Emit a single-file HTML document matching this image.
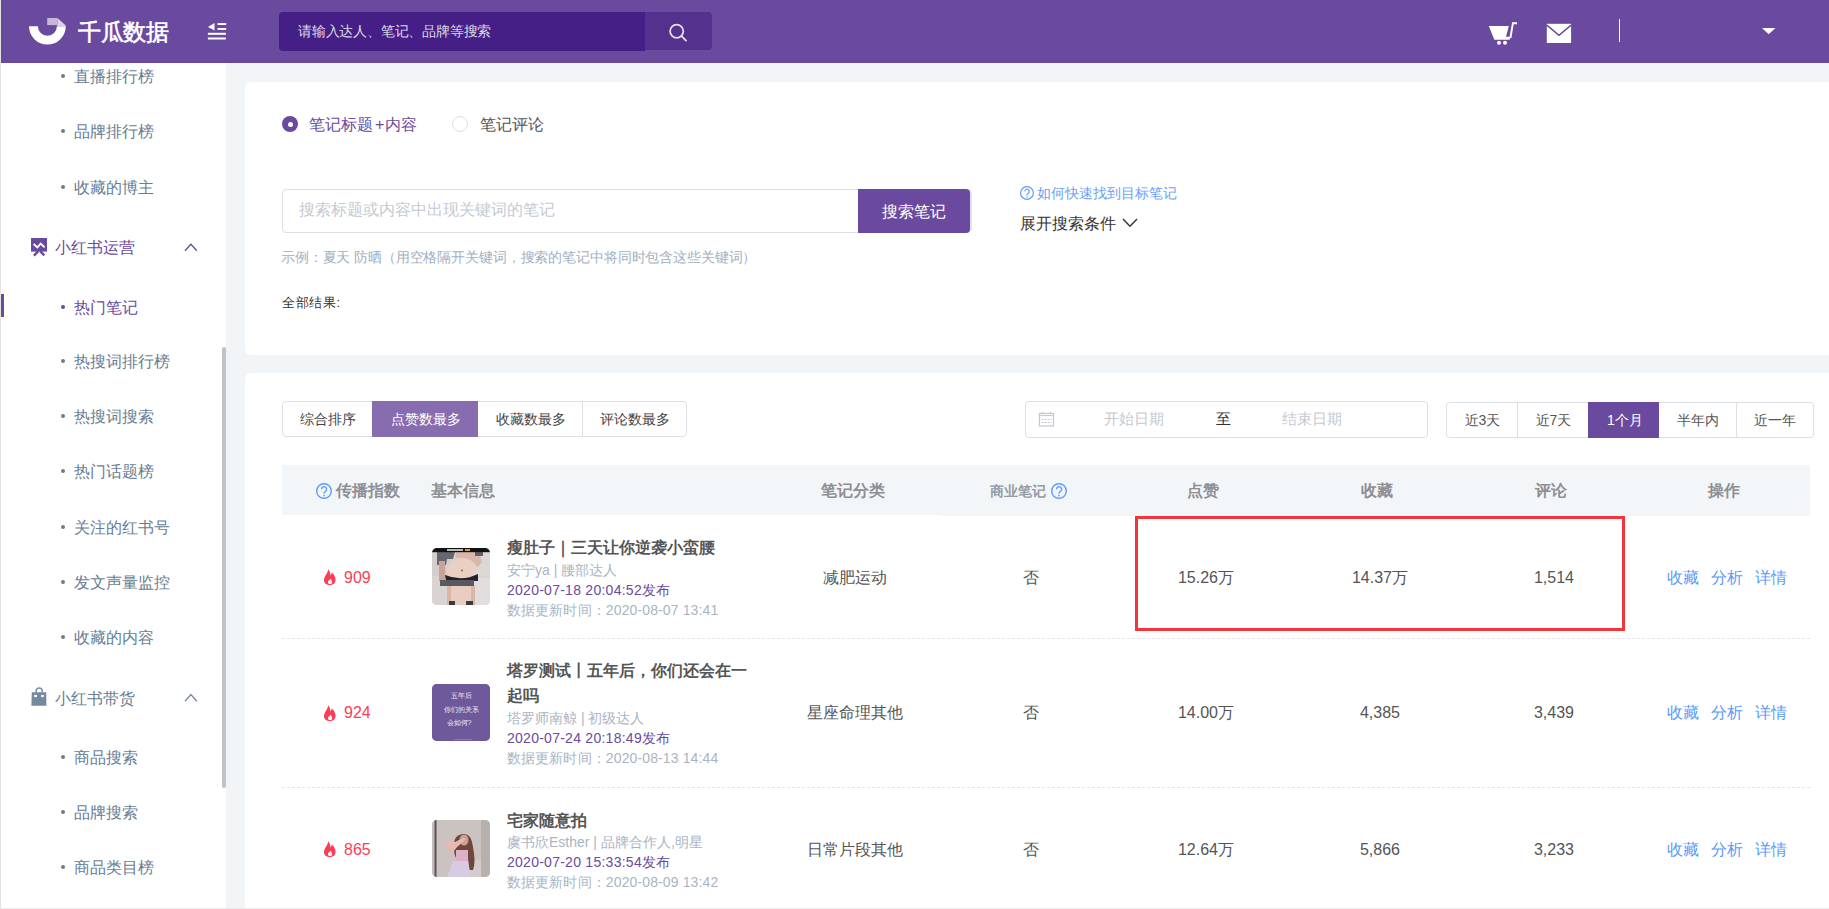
<!DOCTYPE html>
<html><head><meta charset="utf-8">
<style>
*{margin:0;padding:0;box-sizing:border-box}
html,body{width:1829px;height:909px;overflow:hidden}
body{position:relative;background:#f2f5f8;font-family:"Liberation Sans",sans-serif;color:#333}
.a{position:absolute;white-space:nowrap}
#lline{left:0;top:0;width:1px;height:909px;background:#e2e2e2}
#bline{left:0;top:908px;width:1829px;height:1px;background:#ebebeb}
#hdr{left:1px;top:0;width:1828px;height:63px;background:#6a4a9e}
#side{left:1px;top:63px;width:225px;height:846px;background:#fff}
.card{background:#fff;border-radius:6px}
#c1{left:245px;top:82px;width:1600px;height:273px}
#c2{left:245px;top:373px;width:1600px;height:600px}
#logot{left:78px;top:18px;font-size:22.6px;line-height:30px;color:#fff;-webkit-text-stroke:0.6px #fff;letter-spacing:-0.4px}
#sbox{left:279px;top:12px;width:366px;height:39px;background:#461f86;border-radius:4px 0 0 4px}
#sbtn{left:645px;top:12px;width:67px;height:38px;background:#53318d;border-radius:0 4px 4px 0}
#sph{left:298px;top:21px;letter-spacing:-0.2px;font-size:14px;line-height:20px;color:#dcdbe8}
.si{left:74px;font-size:16px;line-height:20px;color:#687d93}
.si i{position:absolute;left:-13px;top:7px;width:4px;height:4px;border-radius:2px;background:#687d93}
.si.act{color:#6a4a9e}.si.act i{background:#6a4a9e}
.sg{left:55px;font-size:16px;line-height:20px;color:#687d93}
.t16{font-size:16px;line-height:20px}
.t14{font-size:14px;line-height:20px}
.th{top:481px;font-size:16px;line-height:20px;font-weight:bold;color:#8e8f94}
#sin{left:282px;top:189px;width:689px;height:44px;border:1px solid #dcdfe6;border-radius:4px;background:#fff}
#sbtn2{left:858px;top:189px;width:112px;height:44px;background:#6a4a9e;border-radius:0 4px 4px 0}
.rv{font-size:16px;line-height:20px;color:#555}
.cc{text-align:center}
.lk{color:#5b9bfa}
.ttl{left:507px;width:252px;white-space:normal;font-size:16px;line-height:25px;font-weight:bold;color:#555}
.sub{left:507px;font-size:14px;line-height:20px}
.thumb{left:432px;width:58px;height:57px;border-radius:5px;overflow:hidden}
.thumb svg{display:block}
#th0{background:#cfc9c9}
#th1{background:#6e5a9c}
#th2{background:#bdb3b0}
.dash{left:282px;width:1530px;height:1px;background:repeating-linear-gradient(90deg,#e3e4f0 0,#e3e4f0 3px,transparent 3px,transparent 5px)}
</style></head><body>
<div class="a" id="hdr"></div>
<svg class="a" style="left:24px;top:12px" width="48" height="38" viewBox="0 0 48 38">
<path d="M5,14.2 A18.4,18.4 0 0 0 41.8,14.2 L32.9,14.2 A9.5,9.5 0 0 1 13.9,14.2 Z" fill="#fff"/>
<rect x="23.2" y="6" width="10.2" height="7.1" fill="#c6b6dc"/>
<polygon points="33.4,6 41.8,13.6 41.8,14.2 32.9,14.2 33.4,13" fill="#ddd3ea"/>
</svg>
<div class="a" id="logot">千瓜数据</div>
<svg class="a" style="left:200px;top:16px" width="36" height="30" viewBox="0 0 36 30">
<polygon points="7.9,10.9 14.5,7.1 14.5,14.5" fill="#fff"/>
<rect x="17.5" y="7.1" width="8.7" height="1.9" fill="#fff"/>
<rect x="17.5" y="12" width="8.7" height="1.9" fill="#fff"/>
<rect x="7.9" y="16.8" width="18" height="2" fill="#fff"/>
<rect x="7.9" y="21.5" width="18" height="2" fill="#fff"/>
</svg>
<div class="a" id="sbox"></div>
<div class="a" id="sbtn"></div>
<div class="a" id="sph">请输入达人、笔记、品牌等搜索</div>
<svg class="a" style="left:636px;top:6px" width="80" height="50" viewBox="0 0 80 50">
<circle cx="40.7" cy="25.3" r="6.6" fill="none" stroke="#e4def0" stroke-width="1.8"/>
<line x1="45.6" y1="30.2" x2="50" y2="34.6" stroke="#e4def0" stroke-width="1.9" stroke-linecap="round"/>
</svg>
<svg class="a" style="left:1482px;top:14px" width="100" height="38" viewBox="0 0 100 38">
<polygon points="6.8,12 26.8,12 24,22.8 28.3,22.8 27.6,25.8 12.3,25.8" fill="#fff"/>
<polyline points="28.4,24 30.9,9.2 35,9.2" fill="none" stroke="#fff" stroke-width="1.9"/>
<circle cx="17" cy="28.7" r="2" fill="#fff"/>
<circle cx="23" cy="28.7" r="2" fill="#fff"/>
<rect x="64.8" y="9.8" width="24.3" height="19.2" fill="#fff"/>
<polyline points="64.8,11.2 77,21.3 89.1,11.2" fill="none" stroke="#6a4a9e" stroke-width="1.5"/>
</svg>
<div class="a" style="left:1619px;top:19px;width:1px;height:23px;background:#fff"></div>
<svg class="a" style="left:1760px;top:26px" width="18" height="10" viewBox="0 0 18 10">
<polygon points="2,2 15.5,2 8.7,8.3" fill="#fff"/>
</svg>
<div class="a" id="side"></div>
<div class="a si" style="top:66.8px"><i></i>直播排行榜</div>
<div class="a si" style="top:121.9px"><i></i>品牌排行榜</div>
<div class="a si" style="top:177.6px"><i></i>收藏的博主</div>
<div class="a si act" style="top:297.8px"><i></i>热门笔记</div>
<div class="a si" style="top:352.0px"><i></i>热搜词排行榜</div>
<div class="a si" style="top:407.4px"><i></i>热搜词搜索</div>
<div class="a si" style="top:462.3px"><i></i>热门话题榜</div>
<div class="a si" style="top:517.6px"><i></i>关注的红书号</div>
<div class="a si" style="top:573.0px"><i></i>发文声量监控</div>
<div class="a si" style="top:627.8px"><i></i>收藏的内容</div>
<div class="a si" style="top:747.6px"><i></i>商品搜索</div>
<div class="a si" style="top:803.3px"><i></i>品牌搜索</div>
<div class="a si" style="top:858.4px"><i></i>商品类目榜</div>
<div class="a sg" style="top:237.5px;color:#6a4a9e">小红书运营</div>
<div class="a sg" style="top:689.0px">小红书带货</div>
<svg class="a" style="left:26px;top:234px" width="26" height="26" viewBox="0 0 26 26">
<rect x="5" y="4" width="16" height="13.6" fill="#6a4a9e"/>
<polyline points="7.6,10 11.4,13.4 14.7,9.6 18.6,13.3" fill="none" stroke="#fff" stroke-width="1.8"/>
<line x1="12.3" y1="17.2" x2="7.9" y2="21.6" stroke="#6a4a9e" stroke-width="2.4"/>
<line x1="14.2" y1="17.2" x2="18.3" y2="21.4" stroke="#6a4a9e" stroke-width="2.4"/>
</svg>
<svg class="a" style="left:26px;top:682px" width="26" height="28" viewBox="0 0 26 28">
<path d="M10.2,10.5 V8 A3.3,3.3 0 0 1 16.2,8 V10.5" fill="none" stroke="#74889e" stroke-width="1.5"/>
<path d="M5.8,10.2 H20.2 L20.4,23.7 H5.4 Z" fill="#74889e"/>
<rect x="8.2" y="12.9" width="2.7" height="2.2" fill="#fff"/>
<rect x="15.1" y="12.9" width="2.7" height="2.2" fill="#fff"/>
</svg>
<svg class="a" style="left:180px;top:238px" width="22" height="16" viewBox="0 0 22 16">
<polyline points="5,12.8 10.9,6.2 16.8,12.8" fill="none" stroke="#6a4a9e" stroke-width="1.3"/>
</svg>
<svg class="a" style="left:180px;top:688px" width="22" height="16" viewBox="0 0 22 16">
<polyline points="5,13.3 10.9,6.6 16.8,13.3" fill="none" stroke="#74889e" stroke-width="1.3"/>
</svg>
<div class="a" style="left:1px;top:294px;width:3px;height:23px;background:#6a4a9e"></div>
<div class="a" style="left:222px;top:347px;width:4px;height:441px;background:#bfc3c8;border-radius:2px"></div>
<div class="a card" id="c1"></div>
<div class="a card" id="c2"></div>

<!-- card1 -->
<div class="a" style="left:282px;top:116px;width:16px;height:16px;border-radius:50%;background:#6a4a9e"></div>
<div class="a" style="left:287.5px;top:121.5px;width:5px;height:5px;border-radius:50%;background:#fff"></div>
<div class="a t16" style="left:309px;top:115px;color:#6a4a9e">笔记标题<span style="margin:0 0.5px 0 2px">+</span>内容</div>
<div class="a" style="left:452px;top:116px;width:16px;height:16px;border-radius:50%;border:1px solid #dcdfe6;background:#fff"></div>
<div class="a t16" style="left:480px;top:115px;color:#555">笔记评论</div>
<div class="a" id="sin"></div>
<div class="a t16" style="left:299px;top:200px;color:#c5c9d2">搜索标题或内容中出现关键词的笔记</div>
<div class="a" style="left:900px;top:189px;width:72px;height:44px;border:1px solid #e2e4ea;border-radius:5px"></div>
<div class="a" id="sbtn2"></div>
<div class="a t16" style="left:882px;top:202px;color:#fff">搜索笔记</div>
<svg class="a" style="left:1019px;top:185px" width="16" height="16" viewBox="0 0 16 16">
<circle cx="8" cy="8" r="6.4" fill="none" stroke="#5f9ef8" stroke-width="1.2"/>
<path d="M5.9,6.5 A2.2,2.2 0 1 1 9.7,7.9 C9.1,8.6 8,9 8,10 V10.4" fill="none" stroke="#5f9ef8" stroke-width="1.2"/>
<circle cx="8" cy="12" r="0.75" fill="#5f9ef8"/>
</svg>
<div class="a t14" style="left:1037px;top:183px;color:#6d9ef6">如何快速找到目标笔记</div>
<div class="a t16" style="left:1020px;top:214px;color:#333">展开搜索条件</div>
<svg class="a" style="left:1120px;top:215px" width="20" height="14" viewBox="0 0 20 14">
<polyline points="3,4 10,11.2 17,4" fill="none" stroke="#333" stroke-width="1.4"/>
</svg>
<div class="a" style="left:281px;top:247px;font-size:14px;letter-spacing:-0.13px;line-height:20px;color:#a3afbf">示例：夏天 防晒（用空格隔开关键词，搜索的笔记中将同时包含这些关键词）</div>
<div class="a" style="left:282px;top:293px;font-size:13px;letter-spacing:0.6px;line-height:20px;color:#333">全部结果:</div>
<!-- card2 tabs -->
<div class="a" style="left:282px;top:401px;width:405px;height:36px;border:1px solid #dcdfe6;border-radius:4px;background:#fff"></div>
<div class="a" style="left:477px;top:401px;width:1px;height:36px;background:#dcdfe6"></div>
<div class="a" style="left:582px;top:401px;width:1px;height:36px;background:#dcdfe6"></div>
<div class="a" style="left:372px;top:401px;width:106px;height:36px;background:#876cb0"></div>
<div class="a t14" style="left:299.5px;top:409px;color:#444">综合排序</div>
<div class="a t14" style="left:390.5px;top:409px;color:#fff">点赞数最多</div>
<div class="a t14" style="left:495.5px;top:409px;color:#444">收藏数最多</div>
<div class="a t14" style="left:600px;top:409px;color:#444">评论数最多</div>
<!-- date -->
<div class="a" style="left:1025px;top:401px;width:403px;height:37px;border:1px solid #dcdfe6;border-radius:4px;background:#fff"></div>
<svg class="a" style="left:1036px;top:410px" width="20" height="20" viewBox="0 0 20 20">
<rect x="3.5" y="3.5" width="14" height="12.5" fill="none" stroke="#c3c7cf" stroke-width="1.2"/>
<line x1="3.5" y1="5.6" x2="17.5" y2="5.6" stroke="#c3c7cf" stroke-width="1"/>
<line x1="6.5" y1="2" x2="6.5" y2="4" stroke="#c3c7cf" stroke-width="1.2"/>
<line x1="14.5" y1="2" x2="14.5" y2="4" stroke="#c3c7cf" stroke-width="1.2"/>
<line x1="5.5" y1="9.5" x2="15.5" y2="9.5" stroke="#c3c7cf" stroke-width="1" stroke-dasharray="2 1"/>
<line x1="5.5" y1="12.5" x2="15.5" y2="12.5" stroke="#c3c7cf" stroke-width="1" stroke-dasharray="2 1"/>
</svg>
<div class="a" style="left:1104px;top:409px;font-size:14.8px;line-height:20px;color:#c5c9d2">开始日期</div>
<div class="a" style="left:1215.5px;top:409px;font-size:14.8px;line-height:20px;color:#303133">至</div>
<div class="a" style="left:1281.5px;top:409px;font-size:14.8px;line-height:20px;color:#c5c9d2">结束日期</div>
<!-- time range -->
<div class="a" style="left:1446px;top:402px;width:368px;height:36px;border:1px solid #dcdfe6;border-radius:4px;background:#fff"></div>
<div class="a" style="left:1517px;top:402px;width:1px;height:36px;background:#dcdfe6"></div>
<div class="a" style="left:1736px;top:402px;width:1px;height:36px;background:#dcdfe6"></div>
<div class="a" style="left:1588px;top:402px;width:71px;height:36px;background:#6a4a9e"></div>
<div class="a t14" style="left:1464.5px;top:410px;color:#555">近3天</div>
<div class="a t14" style="left:1535.5px;top:410px;color:#555">近7天</div>
<div class="a t14" style="left:1607px;top:410px;color:#fff">1个月</div>
<div class="a t14" style="left:1677px;top:410px;color:#555">半年内</div>
<div class="a t14" style="left:1754px;top:410px;color:#555">近一年</div>
<!-- table header -->
<div class="a" style="left:282px;top:465px;width:1528px;height:50px;background:#f3f6f9"></div>
<div class="a" style="left:942px;top:515px;width:868px;height:1px;background:#f3f6f9"></div>
<svg class="a" style="left:315px;top:482px" width="18" height="18" viewBox="0 0 18 18">
<circle cx="9" cy="9" r="7.3" fill="none" stroke="#5c9cfc" stroke-width="1.4"/>
<path d="M6.6,7.3 A2.5,2.5 0 1 1 10.9,8.9 C10.2,9.7 9,10.1 9,11.3 V11.7" fill="none" stroke="#5c9cfc" stroke-width="1.4"/>
<circle cx="9" cy="13.5" r="0.85" fill="#5c9cfc"/>
</svg>
<div class="a th" style="left:336px">传播指数</div>
<div class="a th" style="left:431px">基本信息</div>
<div class="a th" style="left:821px">笔记分类</div>
<div class="a" style="left:990px;top:481px;font-size:14px;line-height:20px;font-weight:bold;color:#959ba6">商业笔记</div>
<svg class="a" style="left:1050px;top:482px" width="18" height="18" viewBox="0 0 18 18">
<circle cx="9" cy="9" r="7.3" fill="none" stroke="#5c9cfc" stroke-width="1.4"/>
<path d="M6.6,7.3 A2.5,2.5 0 1 1 10.9,8.9 C10.2,9.7 9,10.1 9,11.3 V11.7" fill="none" stroke="#5c9cfc" stroke-width="1.4"/>
<circle cx="9" cy="13.5" r="0.85" fill="#5c9cfc"/>
</svg>
<div class="a th" style="left:1187px">点赞</div>
<div class="a th" style="left:1360.5px">收藏</div>
<div class="a th" style="left:1535px">评论</div>
<div class="a th" style="left:1707.5px">操作</div>
<svg class="a" style="left:323.8px;top:569.0px" width="12" height="17" viewBox="0 0 12 17"><path d="M4.2,0.2 C5.6,2 6.6,4.4 6.6,6.4 C7.2,5.5 7.6,4.5 7.7,3.6 C10.2,5.6 11.6,8.2 11.6,11.1 C11.6,14.2 9.1,16.3 5.8,16.3 C2.6,16.3 0,14.2 0,11.1 C0,7.3 3.6,5 4.2,0.2 Z" fill="#fd3d56"/><path d="M6.4,9.8 C7.6,11 8.2,12.2 8.1,13.3 C8,14.6 7.1,15.2 6,15.2 C4.8,15.2 3.9,14.4 3.9,13.3 C3.9,12 5.5,11.3 6.4,9.8 Z" fill="#fff"/></svg>
<div class="a rv" style="left:344px;top:568.0px;color:#fd3d56">909</div>
<div class="a thumb" id="th0" style="top:547.5px"><svg width="58" height="57" viewBox="0 0 58 57">
<rect width="58" height="57" fill="#d3cdcc"/>
<rect x="40" y="0" width="18" height="57" fill="#dcd8d8"/>
<rect x="0" y="28" width="58" height="29" fill="#d9d3d2"/>
<rect x="42" y="30" width="16" height="27" fill="#e2dede"/>
<path d="M5,4 H23 L21,11 H15 L14,17 H5 Z" fill="#66666e"/>
<path d="M24,4 H47 L50,14 L46,19 L38,14 L24,9 Z" fill="#d9b8aa"/><rect x="43" y="4" width="8" height="4" fill="#5f5f68"/>
<rect x="7" y="13" width="6" height="20" fill="#cba392"/>
<ellipse cx="30" cy="22" rx="15" ry="12" fill="#e9d0c4"/>
<circle cx="30" cy="22.5" r="1" fill="#8a6a60"/>
<path d="M13,27 Q30,34 46,26 L46,33 H14 Z" fill="#242226"/>
<rect x="8" y="32" width="34" height="6" fill="#5a5860"/>
<rect x="15" y="38" width="28" height="19" fill="#e8cdc0"/>
<rect x="15" y="38" width="4" height="19" fill="#dab6a6"/>
<rect x="39" y="38" width="4" height="19" fill="#dab6a6"/>
<rect x="17" y="53" width="6" height="4" fill="#3a3a3e"/>
<rect x="34" y="53" width="7" height="4" fill="#3a3a3e"/>
<rect x="0" y="0" width="58" height="4.2" fill="#111"/>
<rect x="15" y="1" width="16" height="2" fill="#bbb"/>
<rect x="33" y="1" width="5" height="2" fill="#d89a40"/>
</svg></div>
<div class="a ttl" style="top:535.1px">瘦肚子｜三天让你逆袭小蛮腰</div>
<div class="a sub" style="top:559.6px;color:#aab4c3">安宁ya | 腰部达人</div>
<div class="a sub" style="top:579.6px;color:#6a4a9e;letter-spacing:0.26px">2020-07-18 20:04:52发布</div>
<div class="a sub" style="top:599.6px;color:#aab4c3;letter-spacing:0.12px">数据更新时间：2020-08-07 13:41</div>
<div class="a rv cc" style="left:755px;width:200px;top:568.0px">减肥运动</div>
<div class="a rv cc" style="left:931px;width:200px;top:568.0px">否</div>
<div class="a rv cc" style="left:1106px;width:200px;top:568.0px">15.26万</div>
<div class="a rv cc" style="left:1280px;width:200px;top:568.0px">14.37万</div>
<div class="a rv cc" style="left:1454px;width:200px;top:568.0px">1,514</div>
<div class="a rv lk" style="left:1667px;top:568.0px">收藏</div>
<div class="a rv lk" style="left:1711px;top:568.0px">分析</div>
<div class="a rv lk" style="left:1755px;top:568.0px">详情</div>
<svg class="a" style="left:323.8px;top:705.0px" width="12" height="17" viewBox="0 0 12 17"><path d="M4.2,0.2 C5.6,2 6.6,4.4 6.6,6.4 C7.2,5.5 7.6,4.5 7.7,3.6 C10.2,5.6 11.6,8.2 11.6,11.1 C11.6,14.2 9.1,16.3 5.8,16.3 C2.6,16.3 0,14.2 0,11.1 C0,7.3 3.6,5 4.2,0.2 Z" fill="#fd3d56"/><path d="M6.4,9.8 C7.6,11 8.2,12.2 8.1,13.3 C8,14.6 7.1,15.2 6,15.2 C4.8,15.2 3.9,14.4 3.9,13.3 C3.9,12 5.5,11.3 6.4,9.8 Z" fill="#fff"/></svg>
<div class="a rv" style="left:344px;top:703.0px;color:#fd3d56">924</div>
<div class="a thumb" id="th1" style="top:684px"><svg width="58" height="57" viewBox="0 0 58 57">
<rect width="58" height="57" fill="#6e5a9b"/>
<text x="29" y="14" font-size="7.2" text-anchor="middle" fill="#ece8f2" font-family="Liberation Sans">五年后</text>
<text x="29" y="27.8" font-size="7.2" text-anchor="middle" fill="#ece8f2" font-family="Liberation Sans">你们的关系</text>
<text x="27" y="41.4" font-size="7.2" text-anchor="middle" fill="#ece8f2" font-family="Liberation Sans">会如何?</text>
<rect x="22" y="55" width="18" height="1" fill="#8a7aaa"/>
</svg></div>
<div class="a ttl" style="top:658.3px">塔罗测试丨五年后，你们还会在一起吗</div>
<div class="a sub" style="top:707.8px;color:#aab4c3">塔罗师南鲸 | 初级达人</div>
<div class="a sub" style="top:727.8px;color:#6a4a9e;letter-spacing:0.26px">2020-07-24 20:18:49发布</div>
<div class="a sub" style="top:747.8px;color:#aab4c3;letter-spacing:0.12px">数据更新时间：2020-08-13 14:44</div>
<div class="a rv cc" style="left:755px;width:200px;top:703.0px">星座命理其他</div>
<div class="a rv cc" style="left:931px;width:200px;top:703.0px">否</div>
<div class="a rv cc" style="left:1106px;width:200px;top:703.0px">14.00万</div>
<div class="a rv cc" style="left:1280px;width:200px;top:703.0px">4,385</div>
<div class="a rv cc" style="left:1454px;width:200px;top:703.0px">3,439</div>
<div class="a rv lk" style="left:1667px;top:703.0px">收藏</div>
<div class="a rv lk" style="left:1711px;top:703.0px">分析</div>
<div class="a rv lk" style="left:1755px;top:703.0px">详情</div>
<svg class="a" style="left:323.8px;top:841.0px" width="12" height="17" viewBox="0 0 12 17"><path d="M4.2,0.2 C5.6,2 6.6,4.4 6.6,6.4 C7.2,5.5 7.6,4.5 7.7,3.6 C10.2,5.6 11.6,8.2 11.6,11.1 C11.6,14.2 9.1,16.3 5.8,16.3 C2.6,16.3 0,14.2 0,11.1 C0,7.3 3.6,5 4.2,0.2 Z" fill="#fd3d56"/><path d="M6.4,9.8 C7.6,11 8.2,12.2 8.1,13.3 C8,14.6 7.1,15.2 6,15.2 C4.8,15.2 3.9,14.4 3.9,13.3 C3.9,12 5.5,11.3 6.4,9.8 Z" fill="#fff"/></svg>
<div class="a rv" style="left:344px;top:840.0px;color:#fd3d56">865</div>
<div class="a thumb" id="th2" style="top:820px"><svg width="58" height="57" viewBox="0 0 58 57">
<rect width="58" height="57" fill="#c5bdba"/>
<rect x="5" y="0" width="44" height="57" fill="#cbc3c0"/>
<rect x="34" y="40" width="15" height="17" fill="#d3ccca"/>
<rect x="49" y="0" width="9" height="57" fill="#b8b0ae"/>
<rect x="2.5" y="0" width="2" height="57" fill="#5a5460"/>
<path d="M22,24 C22,12 38,10 40,22 C42,32 44,42 41,50 L37,50 L36,38 L24,38 C22,34 22,30 22,24 Z" fill="#70463c"/>
<ellipse cx="32" cy="20" rx="4.5" ry="5.5" fill="#c9a193"/>
<rect x="24" y="30" width="12" height="12" fill="#dcb1c4"/>
<path d="M15,57 L21,41 H36 L39,57 Z" fill="#d6cbe3"/>
<ellipse cx="19" cy="26" rx="5.5" ry="5.5" fill="#e5bab0"/>
<path d="M21,23 L32,17.5 L33.5,19.5 L24,28 Z" fill="#e5bab0"/>
</svg></div>
<div class="a ttl" style="top:807.6px">宅家随意拍</div>
<div class="a sub" style="top:832.1px;color:#aab4c3">虞书欣Esther | 品牌合作人,明星</div>
<div class="a sub" style="top:852.1px;color:#6a4a9e;letter-spacing:0.26px">2020-07-20 15:33:54发布</div>
<div class="a sub" style="top:872.1px;color:#aab4c3;letter-spacing:0.12px">数据更新时间：2020-08-09 13:42</div>
<div class="a rv cc" style="left:755px;width:200px;top:840.0px">日常片段其他</div>
<div class="a rv cc" style="left:931px;width:200px;top:840.0px">否</div>
<div class="a rv cc" style="left:1106px;width:200px;top:840.0px">12.64万</div>
<div class="a rv cc" style="left:1280px;width:200px;top:840.0px">5,866</div>
<div class="a rv cc" style="left:1454px;width:200px;top:840.0px">3,233</div>
<div class="a rv lk" style="left:1667px;top:840.0px">收藏</div>
<div class="a rv lk" style="left:1711px;top:840.0px">分析</div>
<div class="a rv lk" style="left:1755px;top:840.0px">详情</div>
<div class="a dash" style="top:638px"></div>
<div class="a dash" style="top:787px"></div>
<div class="a" style="left:1135px;top:516px;width:490px;height:115px;border:3px solid #f0353b"></div>
<div class="a" id="lline"></div>
<div class="a" id="bline"></div>
</body></html>
